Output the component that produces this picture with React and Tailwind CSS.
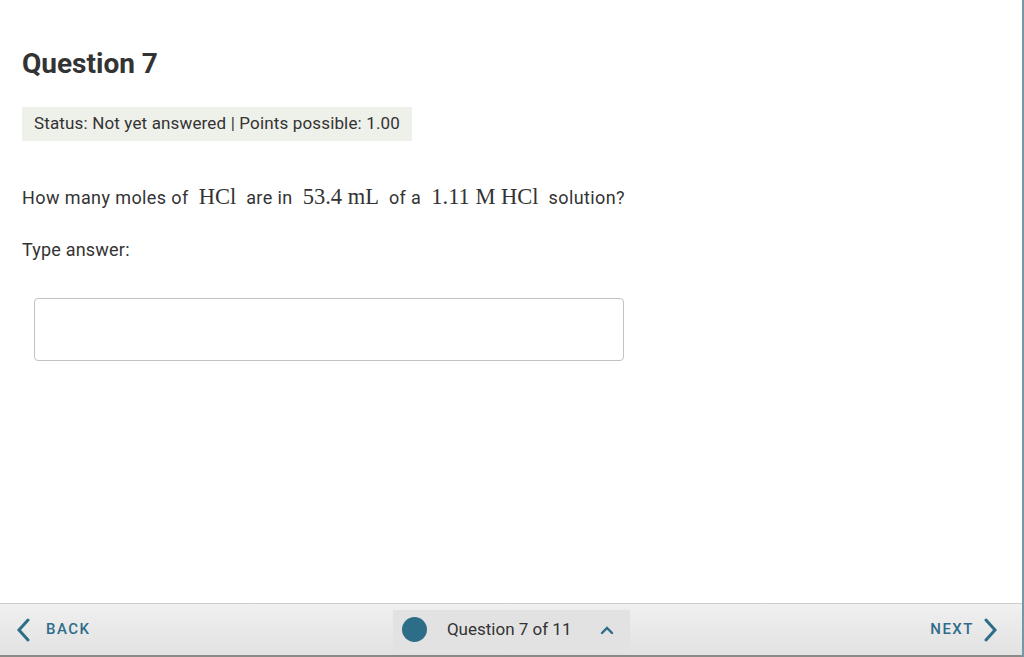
export default function App() {
  return (
    <div className="w-[1024px] h-[657px] flex flex-col bg-white border-r-2 border-[#6f9aa6] font-['Roboto',sans-serif] text-[#333333]">
      <main className="flex-1 px-[22px] pt-[47px]">
        <h1 className="text-[28px] font-bold leading-[34px] text-[#333]">Question 7</h1>
        <div className="mt-[26px] w-[390px] h-[34px] bg-[#eef0ea] px-[12px] flex items-center text-[17px] tracking-[0.15px] text-[#333]">
          Status: Not yet answered | Points possible: 1.00
        </div>
        <p className="mt-[42px] text-[18px] tracking-[0.4px] leading-[28px] flex items-baseline">
          <span>How many moles of</span>
          <span className="mx-[10px] font-['Liberation_Serif',serif] text-[22.5px] tracking-normal">HCl</span>
          <span>are in</span>
          <span className="mx-[10px] font-['Liberation_Serif',serif] text-[22.5px] tracking-normal">53.4 mL</span>
          <span>of a</span>
          <span className="mx-[10px] font-['Liberation_Serif',serif] text-[22.5px] tracking-normal">1.11 M HCl</span>
          <span>solution?</span>
        </p>
        <p className="mt-[24px] text-[18px] tracking-[0.2px] leading-[28px]">Type answer:</p>
        <div className="mt-[34px] ml-[12px] w-[590px] h-[63px] border border-[#c2c2c2] rounded-[4px]" />
      </main>
      <footer className="h-[54px] border-t border-[#cfcfc8] border-b-2 border-b-[#8a8a86] bg-gradient-to-b from-[#f0f0f0] to-[#e2e2e2] flex items-center justify-between">
        <div className="flex items-center pl-[16px] text-[#2e6d88]">
          <svg width="16" height="24" viewBox="0 0 16 24" fill="none" stroke="#2e6d88" strokeWidth="3" strokeLinecap="round">
            <path d="M12 2 L3 12 L12 22" />
          </svg>
          <span className="ml-[14px] text-[15px] font-medium tracking-[1.5px]">BACK</span>
        </div>
        <div className="w-[237px] h-[40px] bg-[#e2e2e2] flex items-center pl-[9px] ml-[2px]">
          <div className="w-[25px] h-[25px] rounded-full bg-[#2e6d88]" />
          <span className="ml-[20px] text-[17px] text-[#333]">Question 7 of 11</span>
          <svg className="ml-[29px]" width="14" height="10" viewBox="0 0 14 10" fill="none" stroke="#2e6d88" strokeWidth="2.4" strokeLinecap="round">
            <path d="M2 8 L7 3 L12 8" />
          </svg>
        </div>
        <div className="flex items-center pr-[24px] text-[#2e6d88]">
          <span className="text-[15px] font-medium tracking-[1.5px]">NEXT</span>
          <svg className="ml-[8px]" width="16" height="24" viewBox="0 0 16 24" fill="none" stroke="#2e6d88" strokeWidth="3" strokeLinecap="round">
            <path d="M4 2 L13 12 L4 22" />
          </svg>
        </div>
      </footer>
    </div>
  );
}
